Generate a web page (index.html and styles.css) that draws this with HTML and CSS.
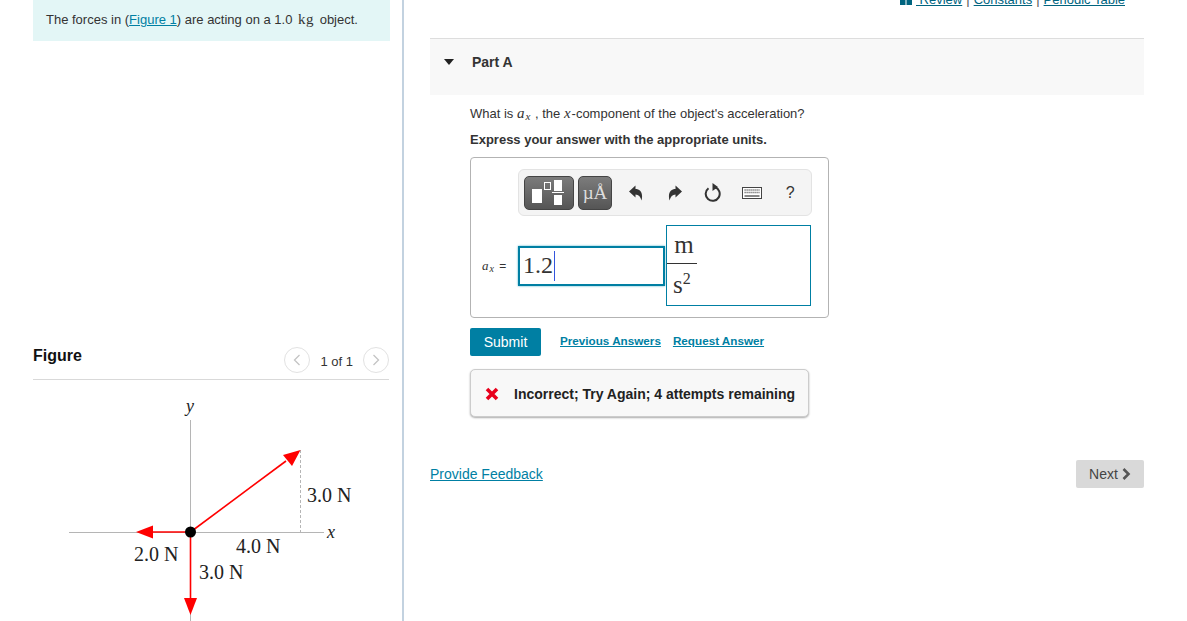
FILE: index.html
```html
<html>
  <head>
    <link rel="stylesheet" href="styles.css">
  </head>
  <body>
    <div class="page">
      <div class="left">
        <div class="intro">
          The forces in (<a href="#">Figure 1</a>) are acting on a 1.0 <span class="unit-kg">kg</span> object.
        </div>
        <div class="figure-head">
          <h3>Figure</h3>
          <div class="pager">
            <span class="pager-btn">
              <svg width="8" height="12" viewBox="0 0 8 12"><path d="M6.5 1 L1.5 6 L6.5 11" fill="none" stroke="#c4c4c4" stroke-width="1.3"/></svg>
            </span>
            <span class="pager-text">1 of 1</span>
            <span class="pager-btn">
              <svg width="8" height="12" viewBox="0 0 8 12"><path d="M1.5 1 L6.5 6 L1.5 11" fill="none" stroke="#c4c4c4" stroke-width="1.3"/></svg>
            </span>
          </div>
        </div>
        <svg class="diagram" width="358" height="241" viewBox="32 380 358 241">
          <line x1="190.5" y1="420" x2="190.5" y2="621" stroke="#b5b5b5"/>
          <line x1="69" y1="532.5" x2="324" y2="532.5" stroke="#b5b5b5"/>
          <line x1="300.5" y1="450" x2="300.5" y2="532" stroke="#b5b5b5" stroke-dasharray="3 2"/>
          <line x1="190.5" y1="532" x2="286" y2="461" stroke="#f00" stroke-width="1.6"/>
          <path d="M300.5 450 L283 455 L292 466 Z" fill="#f00"/>
          <line x1="190.5" y1="532" x2="152" y2="532" stroke="#f00" stroke-width="1.6"/>
          <path d="M136 532 L153 525.5 L153 538.5 Z" fill="#f00"/>
          <line x1="190.5" y1="532" x2="190.5" y2="600" stroke="#f00" stroke-width="1.6"/>
          <path d="M190.5 615 L184 598 L197 598 Z" fill="#f00"/>
          <circle cx="190.5" cy="532" r="5.5" fill="#000"/>
          <text class="fig-label" x="307" y="502">3.0 N</text>
          <text class="fig-label" x="236" y="553">4.0 N</text>
          <text class="fig-label" x="134" y="561">2.0 N</text>
          <text class="fig-label" x="199" y="579">3.0 N</text>
          <text class="fig-axis" x="327" y="538">x</text>
          <text class="fig-axis" x="186" y="412">y</text>
        </svg>
      </div>

      <div class="right">
        <div class="top-links">
          <svg width="12" height="7" viewBox="0 0 12 7"><rect width="5.5" height="5" fill="#00647f"/><rect x="6.5" width="5.5" height="5" fill="#00647f"/></svg>
          <a href="#">&nbsp;Review</a><span>|</span><a href="#">Constants</a><span>|</span><a href="#">Periodic Table</a>
        </div>
        <div class="part-head">
          <span class="caret"></span>
          <span class="part-title">Part A</span>
        </div>
        <div class="part-body">
          <p class="question">What is <i class="math">a<sub>x</sub></i> , the <i class="math">x</i>-component of the object's acceleration?</p>
          <p class="instruct">Express your answer with the appropriate units.</p>

          <div class="answer-box">
            <div class="toolbar">
              <span class="tool-btn tool-wide">
                <svg width="48" height="32" viewBox="0 0 48 32">
                  <rect x="7" y="12" width="10" height="14" fill="#fff"/>
                  <rect x="19.5" y="5.5" width="6" height="7" fill="none" stroke="#fff"/>
                  <rect x="29" y="3" width="8" height="11" fill="#fff"/>
                  <rect x="27" y="15" width="12" height="1" fill="#fff"/>
                  <rect x="29" y="18" width="8" height="10" fill="#fff"/>
                </svg>
              </span>
              <span class="tool-btn tool-unit">µÅ</span>
              <span class="tool-icon tool-first">
                <svg width="14" height="16" viewBox="0 0 14 16"><path d="M0 6.5 L6.5 0.5 V4 C11 4 14.5 7.5 12.5 15.5 C11.5 11.5 9.5 9.5 6.5 9.5 V12.5 Z" fill="#333"/></svg>
              </span>
              <span class="tool-icon">
                <svg width="14" height="16" viewBox="0 0 14 16"><path d="M14 6.5 L7.5 0.5 V4 C3 4 -0.5 7.5 1.5 15.5 C2.5 11.5 4.5 9.5 7.5 9.5 V12.5 Z" fill="#333"/></svg>
              </span>
              <span class="tool-icon">
                <svg width="18" height="19" viewBox="0 0 18 19"><path d="M11 4.2 A7 7 0 1 1 4.5 5.2" fill="none" stroke="#333" stroke-width="2"/><path d="M8.5 0 L14 3.9 L8.5 8 Z" fill="#333"/></svg>
              </span>
              <span class="tool-icon">
                <svg width="20" height="12" viewBox="0 0 20 12">
                  <rect x="0.5" y="0.5" width="19" height="11" fill="#fff" stroke="#444"/>
                  <path d="M2.5 3 H17.5 M2.5 5.5 H17.5" stroke="#666" stroke-width="1.3" stroke-dasharray="1.2 0.8"/>
                  <path d="M2.5 9 H17.5" stroke="#555" stroke-width="1.4"/>
                </svg>
              </span>
              <span class="tool-icon tool-help">?</span>
            </div>

            <div class="math-row">
              <span class="math-label"><i class="math">a<sub>x</sub></i> =</span>
              <div class="value-input">1.2<span class="cursor"></span></div>
              <div class="unit-input">
                <div class="frac">
                  <span class="num">m</span>
                  <span class="den">s<sup>2</sup></span>
                </div>
              </div>
            </div>
          </div>

          <div class="actions">
            <button class="submit">Submit</button>
            <a class="action-link" href="#">Previous Answers</a>
            <a class="action-link" href="#">Request Answer</a>
          </div>

          <div class="feedback">
            <svg width="14" height="14" viewBox="0 0 14 14"><path d="M2 2 L12 12 M12 2 L2 12" stroke="#e8001c" stroke-width="3.6"/></svg>
            <span>Incorrect; Try Again; 4 attempts remaining</span>
          </div>
        </div>

        <div class="bottom-row">
          <a class="provide" href="#">Provide Feedback</a>
          <span class="next">Next
            <svg width="9" height="12" viewBox="0 0 9 12"><path d="M1.5 1 L6.5 6 L1.5 11" fill="none" stroke="#555" stroke-width="2.6"/></svg>
          </span>
        </div>
      </div>
    </div>
  </body>
</html>
```

FILE: styles.css
```css
body {
  margin: 0;
  background: #fff;
  color: #333;
  font-family: "Liberation Sans", Arial, sans-serif;
  font-size: 13px;
}
a {
  color: #007fa3;
}
.page {
  display: flex;
  height: 621px;
  overflow: hidden;
}
.left {
  width: 402px;
  height: 621px;
  flex: none;
  border-right: 2px solid #c3d2e0;
}
.intro {
  margin-left: 33px;
  width: 344px;
  height: 41px;
  padding-left: 13px;
  line-height: 39px;
  font-size: 13px;
  background: #e3f6f6;
}
.unit-kg {
  font-family: "Liberation Serif", serif;
  font-size: 15px;
  margin: 0 2px;
  letter-spacing: 0.5px;
}
.figure-head {
  display: flex;
  justify-content: space-between;
  align-items: flex-start;
  margin: 305px 0 0 33px;
  width: 356px;
  height: 33px;
  border-bottom: 1px solid #d9d9d9;
}
h3 {
  margin: 0;
  font-size: 16px;
  line-height: 20px;
  font-weight: bold;
  color: #111;
}
.pager {
  display: flex;
  align-items: center;
  gap: 10px;
  margin-top: 1px;
}
.pager-btn {
  display: flex;
  align-items: center;
  justify-content: center;
  width: 24px;
  height: 24px;
  border: 1px solid #e2e2e2;
  border-radius: 50%;
}
.pager-text {
  margin-top: 2px;
  font-size: 13px;
}
.diagram {
  display: block;
  margin-left: 32px;
}
.fig-label {
  font-family: "Liberation Serif", serif;
  font-size: 20px;
  fill: #222;
}
.fig-axis {
  font-family: "Liberation Serif", serif;
  font-style: italic;
  font-size: 18px;
  fill: #222;
}
.right {
  width: 714px;
  margin-left: 26px;
}
.top-links {
  display: flex;
  justify-content: flex-end;
  align-items: flex-end;
  gap: 4px;
  height: 7px;
  padding-right: 19px;
  overflow: hidden;
  line-height: 15px;
  font-size: 13px;
  color: #555;
}
.top-links a {
  color: #00647f;
}
.part-head {
  display: flex;
  align-items: flex-start;
  margin-top: 31px;
  padding: 14px 0 0 14px;
  box-sizing: border-box;
  height: 57px;
  border-top: 1px solid #ddd;
  background: #f8f8f8;
}
.caret {
  width: 0;
  height: 0;
  margin-top: 6px;
  border-left: 5.5px solid transparent;
  border-right: 5.5px solid transparent;
  border-top: 6px solid #222;
}
.part-title {
  margin-left: 18px;
  font-weight: bold;
  font-size: 14px;
  line-height: 18px;
}
.part-body {
  padding-left: 40px;
}
.question {
  margin: 10px 0 0 0;
  line-height: 18px;
  font-size: 13px;
}
.instruct {
  margin: 8px 0 0 0;
  line-height: 18px;
  font-size: 13px;
  font-weight: bold;
}
.math {
  font-family: "Liberation Serif", serif;
  font-style: italic;
  font-size: 15px;
  line-height: 0;
  letter-spacing: 1px;
}
.math sub {
  font-size: 11px;
  line-height: 0;
  vertical-align: -2px;
}
.answer-box {
  box-sizing: border-box;
  width: 359px;
  height: 161px;
  margin-top: 8px;
  padding-top: 11px;
  border: 1px solid #b3b3b3;
  border-radius: 4px;
}
.toolbar {
  display: flex;
  align-items: center;
  box-sizing: border-box;
  width: 294px;
  height: 47px;
  margin-left: 47px;
  padding-left: 5px;
  background: #f4f4f4;
  border: 1px solid #e3e3e3;
  border-radius: 6px;
}
.tool-btn {
  display: flex;
  align-items: center;
  justify-content: center;
  box-sizing: border-box;
  height: 34px;
  background: linear-gradient(#7c7c7c, #555);
  border: 1px solid #444;
  border-radius: 5px;
}
.tool-wide {
  width: 50px;
}
.tool-unit {
  width: 34px;
  margin-left: 4px;
  color: #ddd;
  font-family: "Liberation Serif", serif;
  font-size: 19px;
}
.tool-icon {
  display: flex;
  justify-content: center;
  align-items: center;
  width: 38.5px;
}
.tool-first {
  margin-left: 5px;
}
.tool-help {
  font-size: 16px;
  color: #333;
}
.math-row {
  display: flex;
  align-items: center;
  margin-top: 9px;
}
.math-label {
  width: 47px;
  box-sizing: border-box;
  padding-left: 11px;
  font-size: 12px;
  white-space: nowrap;
}
.math-label .math {
  font-size: 13px;
  margin-right: 1px;
}
.math-label sub {
  font-size: 10px;
}
.value-input {
  display: flex;
  align-items: center;
  box-sizing: border-box;
  width: 147px;
  height: 40px;
  padding-left: 3px;
  border: 2px solid #007fa3;
  box-shadow: 0 0 2px #4fb3cc;
  font-family: "Liberation Serif", serif;
  font-size: 24px;
}
.cursor {
  width: 1px;
  height: 30px;
  margin-left: 1px;
  background: #3355dd;
}
.unit-input {
  box-sizing: border-box;
  width: 145px;
  height: 81px;
  margin-left: 1px;
  border: 1px solid #007fa3;
}
.frac {
  display: flex;
  flex-direction: column;
  align-items: center;
  width: 30px;
  font-family: "Liberation Serif", serif;
  font-size: 25px;
}
.num {
  box-sizing: border-box;
  width: 100%;
  height: 38px;
  padding-left: 4px;
  line-height: 38px;
  text-align: center;
  border-bottom: 1px solid #333;
}
.den {
  width: 100%;
  padding-left: 6px;
  box-sizing: border-box;
  line-height: 42px;
}
.den sup {
  font-size: 16px;
  line-height: 0;
}
.actions {
  display: flex;
  align-items: center;
  margin-top: 10px;
}
.submit {
  width: 71px;
  height: 28px;
  margin-right: 19px;
  padding: 0;
  border: none;
  border-radius: 2px;
  background: #007fa3;
  color: #fff;
  font-family: "Liberation Sans", Arial, sans-serif;
  font-size: 14px;
}
.action-link {
  margin-right: 12px;
  margin-bottom: 4px;
  font-size: 11.7px;
  font-weight: bold;
}
.feedback {
  display: flex;
  align-items: center;
  gap: 15px;
  box-sizing: border-box;
  width: 339px;
  height: 48px;
  margin-top: 13px;
  padding: 1px 0 0 14px;
  background: #f8f8f8;
  border: 1px solid #ccc;
  border-radius: 5px;
  box-shadow: 0 1px 2px #aaa;
  font-size: 14px;
  font-weight: bold;
  color: #222;
}
.bottom-row {
  display: flex;
  justify-content: space-between;
  align-items: center;
  margin-top: 43px;
}
.provide {
  font-size: 14px;
}
.next {
  display: flex;
  align-items: center;
  justify-content: center;
  gap: 4px;
  width: 68px;
  height: 28px;
  border-radius: 2px;
  background: #d9d9d9;
  font-size: 14px;
  color: #444;
}
```
